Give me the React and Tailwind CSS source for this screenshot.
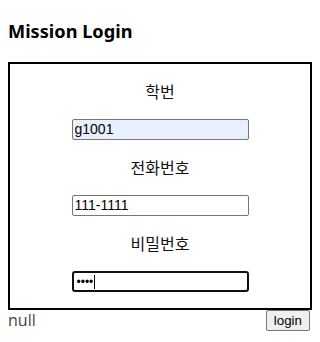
import { useState } from "react";

const labelCls =
  "h-[20px] leading-[20px] text-[16px] text-[#111] font-['Noto_Sans_CJK_KR','Noto_Sans',sans-serif]";
const inputCls =
  "w-[177px] h-[21px] px-[2px] border border-[#767676] rounded-[2px] text-[14px] text-black font-['Liberation_Sans',Arial,sans-serif] outline-none";

export default function App() {
  const [id, setId] = useState("g1001");
  const [phone, setPhone] = useState("111-1111");

  return (
    <div className="w-[320px] h-[342px] bg-white px-2 font-['Noto_Sans_CJK_KR','Noto_Sans',sans-serif]">
      <h3 className="pt-[19px] leading-[25px] text-[18.2px] font-bold text-black font-['Noto_Sans','Noto_Sans_CJK_KR',sans-serif]">
        Mission Login
      </h3>

      <div className="mt-[18px] border-2 border-black flex flex-col items-center pt-[17px] pb-[16px]">
        <div className={labelCls}>학번</div>
        <input
          className={`${inputCls} mt-[18px] bg-[#e8f0fe]`}
          value={id}
          onChange={e => setId(e.target.value)}
        />

        <div className={`${labelCls} mt-[17px]`}>전화번호</div>
        <input
          className={`${inputCls} mt-[18px] bg-white`}
          value={phone}
          onChange={e => setPhone(e.target.value)}
        />

        <div className={`${labelCls} mt-[17px]`}>비밀번호</div>
        {/* focused password field */}
        <div className="mt-[18px] w-[177px] h-[21px] pl-[3px] border-2 border-[#101010] rounded-[3px] bg-white flex items-center">
          <span className="text-[12px] leading-none text-black font-['Liberation_Sans',Arial,sans-serif]">
            ••••
          </span>
          <span className="ml-[1px] w-px h-[14px] bg-black" />
        </div>
      </div>

      <div className="flex justify-between items-start">
        <span className="leading-[21px] text-[16px] text-[#444] font-['Open_Sans','Noto_Sans',sans-serif]">
          null
        </span>
        <button className="mr-[2px] h-[21px] px-[7px] bg-[#efefef] border border-[#767676] rounded-[2px] text-[13.33px] leading-none text-black font-['Liberation_Sans',Arial,sans-serif]">
          login
        </button>
      </div>
    </div>
  );
}
